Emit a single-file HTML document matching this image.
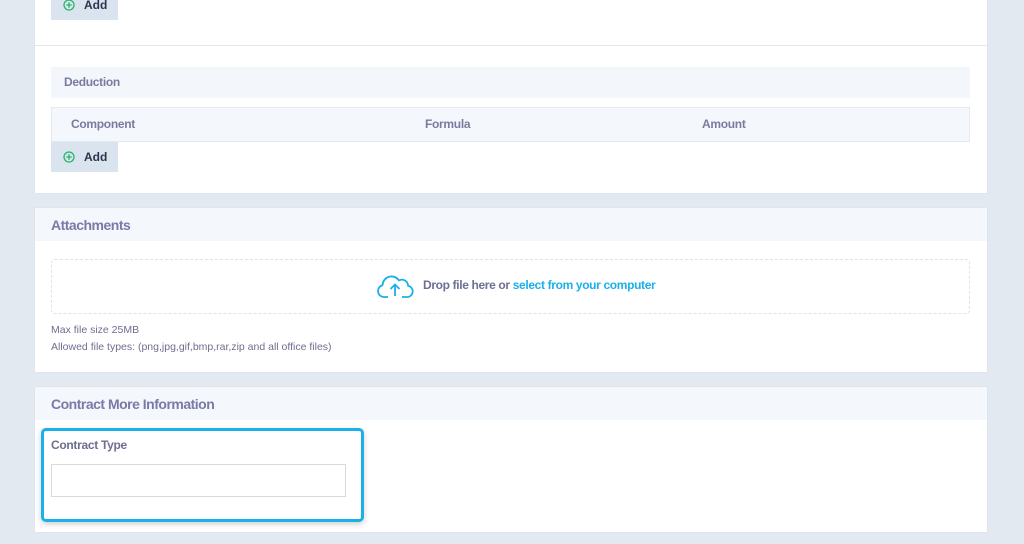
<!DOCTYPE html><html><head><style>
body{margin:0;width:1024px;height:544px;background:#e3e9f1;font-family:"Liberation Sans",sans-serif;position:relative;overflow:hidden}
.a{position:absolute}
.card{position:absolute;left:34px;width:954px;background:#fff;border:1px solid #dfe5ec;box-sizing:border-box}
.btn{position:absolute;background:#dae4ef;width:67px;height:30px;font-size:12px;font-weight:bold;color:#2d3350}
.btn svg{position:absolute;left:12px;top:9px}
.btn span{position:absolute;left:33px;top:8px}
.hd{position:absolute;left:0;right:0;height:33px;background:#f4f7fb;color:#7a7aa8;font-weight:bold;font-size:14px;letter-spacing:-0.5px}
.hd span{position:absolute;left:16px;top:9px}
</style></head><body>
<div class="card" style="top:-2px;height:196px"></div>
<div class="a" style="left:35px;top:45px;width:952px;height:1px;background:#e3e8ee"></div>
<div class="btn" style="left:51px;top:-10px"><svg width="12" height="12"><circle cx="6" cy="6" r="5" fill="none" stroke="#27b36b" stroke-width="1.3"/><path d="M6 3.3v5.4M3.3 6h5.4" stroke="#27b36b" stroke-width="1.3"/></svg><span>Add</span></div>
<div class="a" style="left:51px;top:67px;width:919px;height:31px;background:#f3f6fa;font-size:12px;font-weight:bold;color:#7a7aa0;letter-spacing:-0.3px"><span class="a" style="left:13px;top:8px">Deduction</span></div>
<div class="a" style="left:51px;top:107px;width:919px;height:35px;background:#f4f7fb;border:1px solid #e6eaf0;box-sizing:border-box;font-size:12px;font-weight:bold;color:#7a7aa0;letter-spacing:-0.3px"><span class="a" style="left:19px;top:9px">Component</span><span class="a" style="left:373px;top:9px">Formula</span><span class="a" style="left:650px;top:9px">Amount</span></div>
<div class="btn" style="left:51px;top:142px"><svg width="12" height="12"><circle cx="6" cy="6" r="5" fill="none" stroke="#27b36b" stroke-width="1.3"/><path d="M6 3.3v5.4M3.3 6h5.4" stroke="#27b36b" stroke-width="1.3"/></svg><span>Add</span></div>

<div class="card" style="top:207px;height:166px"><div class="hd" style="top:0"><span>Attachments</span></div></div>
<div class="a" style="left:51px;top:259px;width:919px;height:55px;border:1.5px dashed #dde3ea;border-radius:4px;box-sizing:border-box"></div>
<svg class="a" style="left:376px;top:272px" width="38" height="28" viewBox="0 0 38 28"><path d="M12 25H8a6 6 0 0 1-1.5-11.8A9 9 0 0 1 23 8.5a6 6 0 0 1 9 5.3A5.6 5.6 0 0 1 30 25h-4" fill="none" stroke="#1ab0e8" stroke-width="1.8" stroke-linejoin="round"/><path d="M19 24V12.5M14.5 17l4.5-4.5 4.5 4.5" fill="none" stroke="#1ab0e8" stroke-width="1.8"/></svg>
<div class="a" style="left:423px;top:278px;font-size:12px;font-weight:bold;color:#6e6e96;letter-spacing:-0.35px">Drop file here or <span style="color:#1ab0e8">select from your computer</span></div>
<div class="a" style="left:51px;top:322px;font-size:10.5px;color:#6e6e90;line-height:17px">Max file size 25MB<br>Allowed file types: (png,jpg,gif,bmp,rar,zip and all office files)</div>

<div class="card" style="top:386px;height:147px"><div class="hd" style="top:0"><span>Contract More Information</span></div></div>
<div class="a" style="left:41px;top:428px;width:323px;height:94px;border:3px solid #1ab0e8;border-radius:5px;box-sizing:border-box;box-shadow:0 2px 6px rgba(0,0,0,.2)"></div>
<div class="a" style="left:51px;top:438px;font-size:12px;font-weight:bold;color:#6e6e90;letter-spacing:-0.3px">Contract Type</div>
<div class="a" style="left:51px;top:464px;width:295px;height:33px;border:1px solid #d6dbe2;box-sizing:border-box;background:#fff"></div>
</body></html>
